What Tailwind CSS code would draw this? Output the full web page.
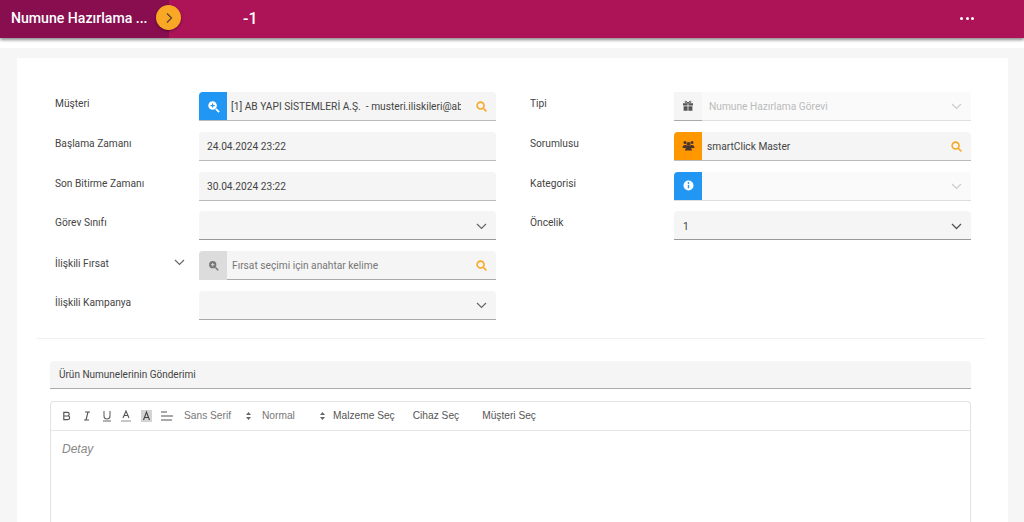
<!DOCTYPE html>
<html lang="en">
<head>
    <meta charset="UTF-8">
    <meta name="viewport" content="width=device-width, initial-scale=1.0">
    <title>Numune Hazırlama</title>
    <script src="https://cdn.jsdelivr.net/npm/@tailwindcss/browser@4"></script>
</head>
<body class="bg-[#f6f6f6] h-[522px] overflow-hidden font-['Roboto',sans-serif] text-[#555]">
    <!-- Top bar -->
    <header class="relative z-10 h-[38px] bg-[#ad1457] flex items-center shadow-[0_2px_3px_rgba(0,0,0,0.45)]">
        <div class="w-[169px] h-full bg-[#880e4f] pl-[11px] flex items-center text-white text-[14.1px] font-medium whitespace-nowrap">Numune Hazırlama ...</div>
        <button class="absolute left-[156px] top-[5px] w-[25px] h-[25px] rounded-full bg-[#f9a825] flex items-center justify-center shadow-[0_1px_3px_rgba(0,0,0,0.4)]">
            <svg class="w-3 h-3" viewBox="0 0 12 12" fill="none" stroke="#5d4037" stroke-width="1.3"><path d="M4 1.5 8.5 6 4 10.5"/></svg>
        </button>
        <div class="ml-[74px] text-white text-[16px] font-medium">-1</div>
        <div class="ml-auto mr-[50px] mb-[2px] flex gap-[2.5px]">
            <span class="w-[3px] h-[3px] rounded-full bg-white"></span>
            <span class="w-[3px] h-[3px] rounded-full bg-white"></span>
            <span class="w-[3px] h-[3px] rounded-full bg-white"></span>
        </div>
    </header>
    <div class="h-[10px] bg-white"></div>

    <!-- Form card -->
    <main class="bg-white ml-[17px] mr-[16px] mt-[10px] pt-[34px] h-[464px] overflow-hidden">
        <div class="flex gap-[34px] pl-[38px]">
            <div class="w-[441px] flex flex-col gap-[10.8px]">
                <div class="flex h-[29px]">
                    <label class="w-[144px] text-[10.2px] pt-[4px] text-[#444]">Müşteri</label>
                    <div class="flex-1 flex bg-[#f5f5f5] rounded-t border-b border-[#bbb]">
                        <span class="w-[28px] bg-[#2196f3] rounded-tl flex items-center justify-center">
                            <svg class="w-[13px] h-[13px]" viewBox="0 0 14 14"><circle cx="6" cy="6" r="4.6" fill="white"/><path d="M9.5 9.5 13 13" stroke="white" stroke-width="2"/><path d="M6 3.8v4.4M3.8 6h4.4" stroke="#2196f3" stroke-width="1.2"/></svg>
                        </span>
                        <span class="w-[234px] pl-[4px] text-[10.2px] pt-[1px] leading-[28px] text-[#444] overflow-hidden whitespace-pre">[1] AB YAPI SİSTEMLERİ A.Ş.  - musteri.iliskileri@ab</span>
                        <span class="flex-1 flex items-center justify-end pr-[9px] pt-[1px]">
                            <svg class="w-[11px] h-[11px]" viewBox="0 0 12 12" fill="none" stroke="#f9a825" stroke-width="1.7"><circle cx="5" cy="5" r="3.8"/><path d="M8 8l3.3 3.3"/></svg>
                        </span>
                    </div>
                </div>
                <div class="flex h-[29px]">
                    <label class="w-[144px] text-[10.2px] pt-[4px] text-[#444]">Başlama Zamanı</label>
                    <div class="flex-1 bg-[#f5f5f5] rounded-t border-b border-[#bbb] pl-[8px] pt-[1px] text-[10.2px] leading-[28px] text-[#444]">24.04.2024 23:22</div>
                </div>
                <div class="flex h-[29px]">
                    <label class="w-[144px] text-[10.2px] pt-[4px] text-[#444]">Son Bitirme Zamanı</label>
                    <div class="flex-1 bg-[#f5f5f5] rounded-t border-b border-[#bbb] pl-[8px] pt-[1px] text-[10.2px] leading-[28px] text-[#444]">30.04.2024 23:22</div>
                </div>
                <div class="flex h-[29px]">
                    <label class="w-[144px] text-[10.2px] pt-[4px] text-[#444]">Görev Sınıfı</label>
                    <div class="flex-1 bg-[#f5f5f5] rounded-t border-b border-[#999] flex items-center justify-end pr-[9px] pt-[2px]">
                        <svg class="w-[11px] h-[7px]" viewBox="0 0 11 7" fill="none" stroke="#666" stroke-width="1.2"><path d="M1 1l4.5 4.5L10 1"/></svg>
                    </div>
                </div>
                <div class="flex h-[29px]">
                    <label class="w-[144px] text-[10.2px] pt-[5px] text-[#444] flex justify-between items-start pr-[14px]">
                        <span>İlişkili Fırsat</span>
                        <svg class="w-[11px] h-[7px] mt-[3px]" viewBox="0 0 11 7" fill="none" stroke="#666" stroke-width="1.2"><path d="M1 1l4.5 4.5L10 1"/></svg>
                    </label>
                    <div class="flex-1 flex bg-[#f5f5f5] rounded-t">
                        <span class="w-[28px] bg-[#dcdcdc] rounded-tl flex items-center justify-center">
                            <svg class="w-[11px] h-[11px]" viewBox="0 0 14 14"><circle cx="6" cy="6" r="4.6" fill="#777"/><path d="M9.5 9.5 13 13" stroke="#777" stroke-width="2"/><path d="M6 3.8v4.4M3.8 6h4.4" stroke="#dcdcdc" stroke-width="1.2"/></svg>
                        </span>
                        <span class="flex-1 flex items-center border-b border-[#aaa] pl-[5px] pr-[9px] pt-[1px] text-[10.2px] text-[#777]">
                            Fırsat seçimi için anahtar kelime
                            <svg class="ml-auto w-[11px] h-[11px]" viewBox="0 0 12 12" fill="none" stroke="#f9a825" stroke-width="1.7"><circle cx="5" cy="5" r="3.8"/><path d="M8 8l3.3 3.3"/></svg>
                        </span>
                    </div>
                </div>
                <div class="flex h-[29px]">
                    <label class="w-[144px] text-[10.2px] pt-[4px] text-[#444]">İlişkili Kampanya</label>
                    <div class="flex-1 bg-[#f5f5f5] rounded-t border-b border-[#aaa] flex items-center justify-end pr-[9px] pt-[2px]">
                        <svg class="w-[11px] h-[7px]" viewBox="0 0 11 7" fill="none" stroke="#666" stroke-width="1.2"><path d="M1 1l4.5 4.5L10 1"/></svg>
                    </div>
                </div>
            </div>

            <div class="w-[441px] flex flex-col gap-[10.8px]">
                <div class="flex h-[29px]">
                    <label class="w-[144px] text-[10.2px] pt-[4px] text-[#444]">Tipi</label>
                    <div class="flex-1 flex bg-[#fafafa] rounded-t border-b border-[#e0e0e0]">
                        <span class="w-[28px] bg-[#f5f5f5] border-b border-[#aaa] -mb-px flex items-center justify-center">
                            <svg class="w-[12px] h-[12px]" viewBox="0 0 12 12" fill="#555"><path d="M1 3.2h4.6v2.3H1zM6.4 3.2H11v2.3H6.4zM1.6 6.2h4v4.6h-4zM6.4 6.2h4v4.6h-4z"/><path d="M6 3C4.500 1 3.200.8 3 1.800S4.500 3 6 3c1.500 0 3.200-.2 3-1.200S7.500 1 6 3z" fill="none" stroke="#555"/></svg>
                        </span>
                        <span class="flex-1 pl-[7px] pt-[1px] text-[10.2px] leading-[28px] text-[#bbb]">Numune Hazırlama Görevi</span>
                        <span class="flex items-center pr-[9px] pt-[1px]">
                            <svg class="w-[11px] h-[7px]" viewBox="0 0 11 7" fill="none" stroke="#ccc" stroke-width="1.2"><path d="M1 1l4.5 4.5L10 1"/></svg>
                        </span>
                    </div>
                </div>
                <div class="flex h-[29px]">
                    <label class="w-[144px] text-[10.2px] pt-[4px] text-[#444]">Sorumlusu</label>
                    <div class="flex-1 flex bg-[#f5f5f5] rounded-t border-b border-[#bbb]">
                        <span class="w-[28px] bg-[#ff9800] rounded-tl flex items-center justify-center">
                            <svg class="w-[13px] h-[11px]" viewBox="0 0 13 11" fill="#4e342e"><circle cx="3" cy="2.500" r="1.500"/><circle cx="10" cy="2.500" r="1.500"/><circle cx="6.500" cy="4" r="2"/><path d="M.5 8c0-2 1-3 2.500-3s2 .5 2 1H8c0-.5.500-1 2-1s2.500 1 2.500 3zM3 10.500c0-2 1.500-3.500 3.500-3.500S10 8.500 10 10.500z"/></svg>
                        </span>
                        <span class="flex-1 pl-[5px] pt-[1px] text-[10.2px] leading-[28px] text-[#444]">smartClick Master</span>
                        <span class="flex items-center pr-[9px] pt-[1px]">
                            <svg class="w-[11px] h-[11px]" viewBox="0 0 12 12" fill="none" stroke="#f9a825" stroke-width="1.7"><circle cx="5" cy="5" r="3.8"/><path d="M8 8l3.3 3.3"/></svg>
                        </span>
                    </div>
                </div>
                <div class="flex h-[29px]">
                    <label class="w-[144px] text-[10.2px] pt-[4px] text-[#444]">Kategorisi</label>
                    <div class="flex-1 flex bg-[#fafafa] rounded-t border-b border-[#ddd]">
                        <span class="w-[28px] bg-[#2196f3] rounded-tl flex items-center justify-center">
                            <svg class="w-[11px] h-[11px]" viewBox="0 0 11 11"><circle cx="5.500" cy="5.500" r="5" fill="white"/><path d="M5.500 4.800v3.400" stroke="#2196f3" stroke-width="1.400"/><circle cx="5.500" cy="3" r=".9" fill="#2196f3"/></svg>
                        </span>
                        <span class="flex-1"></span>
                        <span class="flex items-center pr-[9px] pt-[1px]">
                            <svg class="w-[11px] h-[7px]" viewBox="0 0 11 7" fill="none" stroke="#ccc" stroke-width="1.2"><path d="M1 1l4.5 4.5L10 1"/></svg>
                        </span>
                    </div>
                </div>
                <div class="flex h-[29px]">
                    <label class="w-[144px] text-[10.2px] pt-[4px] text-[#444]">Öncelik</label>
                    <div class="flex-1 bg-[#f5f5f5] rounded-t border-b border-[#999] flex items-center justify-between pl-[9px] pr-[9px] pt-[2px] text-[10.2px] text-[#444]">
                        1
                        <svg class="w-[11px] h-[7px]" viewBox="0 0 11 7" fill="none" stroke="#555" stroke-width="1.3"><path d="M1 1l4.5 4.5L10 1"/></svg>
                    </div>
                </div>
            </div>
        </div>

        <div class="mt-[18px] ml-[20px] mr-[23px] border-t border-[#f0f0f0]"></div>

        <!-- Subject and editor -->
        <div class="mt-[22px] ml-[33px] w-[921px]">
            <div class="h-[28px] bg-[#f5f5f5] rounded-t border-b border-[#aaa] pl-[9px] text-[10px] leading-[27px] text-[#444]">Ürün Numunelerinin Gönderimi</div>
            <div class="mt-[12px] border border-b-0 border-[#e2e2e2] rounded-t h-[121px]">
                <div class="h-[29px] border-b border-[#e6e6e6] flex items-center pl-[11px] text-[10.2px] font-['Liberation_Sans',sans-serif] text-[#555] whitespace-nowrap">
                    <svg class="w-[9px] h-[10px]" viewBox="0 0 10 10" fill="none" stroke="#555" stroke-width="1.300"><path d="M2 1h4a2 2 0 0 1 0 4H2zM2 5h4.500a2 2 0 0 1 0 4H2z"/></svg>
                    <svg class="w-[10px] h-[10px] ml-[11px]" viewBox="0 0 10 10" fill="none" stroke="#555" stroke-width="1.100"><path d="M3 1h5M2 9h5M6 1 4 9"/></svg>
                    <svg class="w-[10px] h-[12px] ml-[10px]" viewBox="0 0 10 12" fill="none" stroke="#666" stroke-width="1.100"><path d="M2 1v5a3 3 0 0 0 6 0V1M1 11h8"/></svg>
                    <svg class="w-[10px] h-[12px] ml-[9px]" viewBox="0 0 10 12" fill="none" stroke="#555" stroke-width="1.100"><path d="M2 8l3-7 3 7M3 5.500h4"/><path d="M0 11h10" stroke="#999"/></svg>
                    <svg class="w-[11px] h-[12px] ml-[10px]" viewBox="0 0 11 12" fill="none"><rect x="0" y="0" width="11" height="12" fill="#d4d4d4"/><path d="M2.500 10l3-8 3 8M3.500 7.500h4" stroke="#444" stroke-width="1.100"/></svg>
                    <svg class="w-[12px] h-[10px] ml-[9px]" viewBox="0 0 12 10" fill="none" stroke="#555" stroke-width="1.100"><path d="M0 1h6M0 5h12M0 9h11"/></svg>
                    <span class="ml-[11px] w-[62px] text-[#777]">Sans Serif</span>
                    <svg class="w-[5px] h-[8px]" viewBox="0 0 5 8" fill="#666"><path d="M2.500 0 5 3H0zM2.500 8 0 5h5z"/></svg>
                    <span class="ml-[11px] w-[57px] text-[#777]">Normal</span>
                    <svg class="w-[5px] h-[8px] ml-[1px]" viewBox="0 0 5 8" fill="#666"><path d="M2.500 0 5 3H0zM2.500 8 0 5h5z"/></svg>
                    <span class="ml-[8px] text-[#555]">Malzeme Seç</span>
                    <span class="ml-[18px] text-[#555]">Cihaz Seç</span>
                    <span class="ml-[23px] text-[#555]">Müşteri Seç</span>
                </div>
                <div class="pl-[11px] pt-[9px] text-[12px] italic text-[#888] font-['Liberation_Sans',sans-serif]">Detay</div>
            </div>
        </div>
    </main>
</body>
</html>
